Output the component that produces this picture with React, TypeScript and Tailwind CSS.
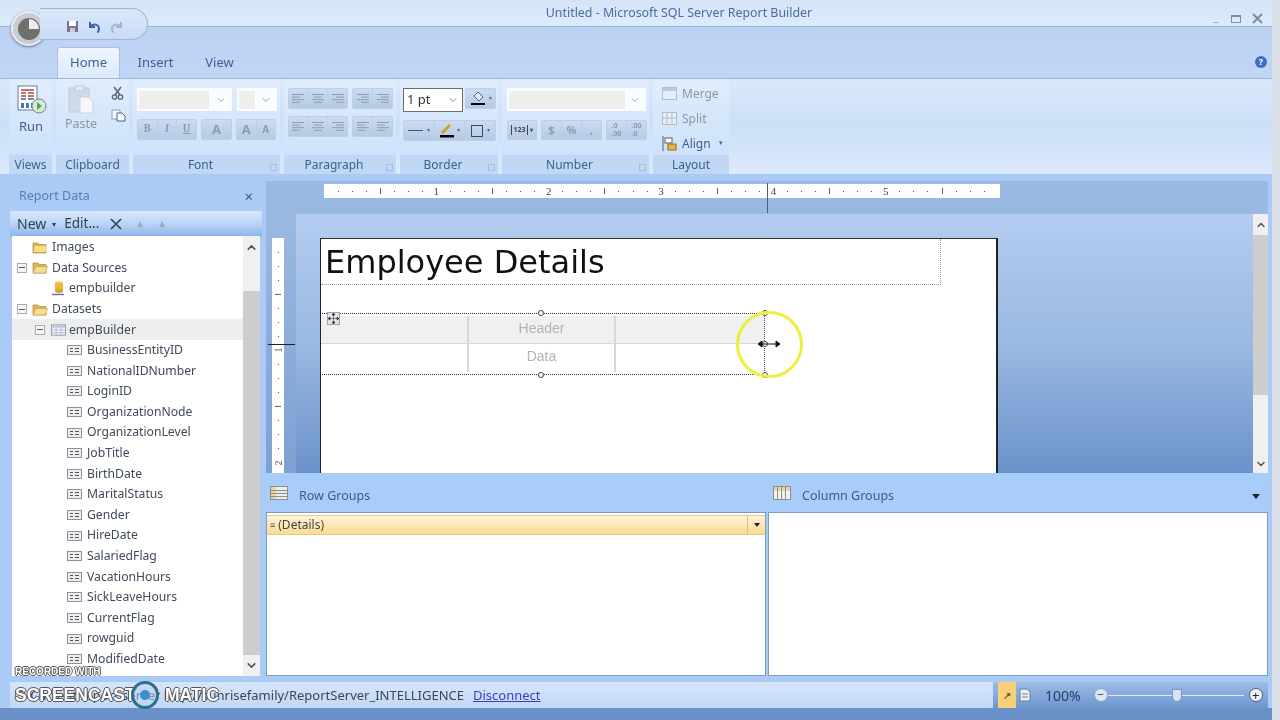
import type { ReactNode } from "react";
import { ChevronDown, ChevronUp } from "lucide-react";

const fields = [
  "BusinessEntityID",
  "NationalIDNumber",
  "LoginID",
  "OrganizationNode",
  "OrganizationLevel",
  "JobTitle",
  "BirthDate",
  "MaritalStatus",
  "Gender",
  "HireDate",
  "SalariedFlag",
  "VacationHours",
  "SickLeaveHours",
  "CurrentFlag",
  "rowguid",
  "ModifiedDate",
];

function Folder({ open }: { open?: boolean }) {
  return (
    <svg width="16" height="13" viewBox="0 0 16 13" className="shrink-0">
      <path d="M1 2h5l1 1.5h7v8.5H1z" fill="#e3b44a" stroke="#a98a4a" strokeWidth="0.7" />
      {open ? (
        <path d="M1 12l2.5-6.5H15.5L13.5 12z" fill="#f6dc8e" stroke="#b99a55" strokeWidth="0.6" />
      ) : (
        <rect x="2" y="5" width="12" height="6" fill="#f8dc82" />
      )}
    </svg>
  );
}

function Expander({ className }: { className: string }) {
  return (
    <span className={`flex h-[10px] w-[10px] shrink-0 items-center justify-center border border-[#a9a9a9] bg-[#f6f6f6] ${className}`}>
      <span className="h-px w-[6px] bg-[#555]" />
    </span>
  );
}

function FieldIcon() {
  return (
    <svg width="15" height="10" viewBox="0 0 15 10" className="shrink-0">
      <rect x="0.5" y="0.5" width="14" height="9" fill="#eceef2" stroke="#8d929b" />
      <path d="M3 3.5h3M3 6.5h3M8 3.5h4M8 6.5h4" stroke="#555" />
    </svg>
  );
}

function TableIcon() {
  return (
    <svg width="15" height="12" viewBox="0 0 16 12" className="shrink-0">
      <rect x="0.5" y="0.5" width="15" height="11" fill="#f0f3f8" stroke="#8e9db3" />
      <rect x="1" y="1" width="14" height="2.5" fill="#b8c8df" />
      <path d="M1 6h14M1 8.8h14M5.5 3v8M10.5 3v8" stroke="#a8b5c8" strokeWidth="0.8" />
    </svg>
  );
}

function DbIcon() {
  return (
    <svg width="14" height="16" viewBox="0 0 14 16" className="shrink-0">
      <ellipse cx="8" cy="3" rx="4" ry="2" fill="#f6d35f" />
      <rect x="4" y="3" width="8" height="8" fill="#e8b93a" />
      <ellipse cx="8" cy="11" rx="4" ry="2" fill="#d7a42c" />
      <path d="M1 14.5h12" stroke="#5874ab" strokeWidth="1.4" />
    </svg>
  );
}

function TreeRow({
  indent,
  expander,
  icon,
  label,
  selected,
  gap = "ml-[4px]",
}: {
  indent: string;
  expander?: string;
  icon: ReactNode;
  label: string;
  selected?: boolean;
  gap?: string;
}) {
  return (
    <div className={`flex h-[20.6px] shrink-0 items-center ${indent} ${selected ? "bg-[#eeeeee]" : ""}`}>
      {expander && <Expander className={expander} />}
      {icon}
      <span className={`${gap} whitespace-nowrap text-[12.2px] text-[#3f4a5a]`}>{label}</span>
    </div>
  );
}

function Tree() {
  return (
    <div className="flex h-[440px] shrink-0 bg-white">
      <div className="flex min-w-0 flex-1 flex-col overflow-hidden pt-[1px]">
        <TreeRow indent="pl-[20px]" icon={<Folder />} label="Images" />
        <TreeRow indent="pl-[5px]" expander="mr-[5px]" icon={<Folder open />} label="Data Sources" />
        <TreeRow indent="pl-[39px]" icon={<DbIcon />} label="empbuilder" gap="ml-[4px]" />
        <TreeRow indent="pl-[5px]" expander="mr-[5px]" icon={<Folder open />} label="Datasets" />
        <TreeRow indent="pl-[23px]" expander="mr-[6px]" selected icon={<TableIcon />} label="empBuilder" gap="ml-[3px]" />
        {fields.map((f) => (
          <TreeRow key={f} indent="pl-[55px]" icon={<FieldIcon />} label={f} gap="ml-[5px]" />
        ))}
      </div>
      <div className="flex w-[17px] shrink-0 flex-col bg-[#f0f0f0]">
        <div className="flex h-[55px] items-start justify-center pt-[5px]">
          <ChevronUp size={13} strokeWidth={3} className="text-[#555]" />
        </div>
        <div className="h-[364px] bg-[#cdcdcd]" />
        <div className="flex flex-1 items-center justify-center">
          <ChevronDown size={13} strokeWidth={3} className="text-[#555]" />
        </div>
      </div>
    </div>
  );
}

function ReportData() {
  return (
    <div className="flex w-[252px] shrink-0 flex-col">
      <div className="flex h-[37px] items-center justify-between pl-[9px] pr-[9px] pt-[8px]">
        <span className="text-[12.5px] text-[#5a7fb0]">Report Data</span>
        <span className="text-[15px] leading-none text-[#3c5a85]">×</span>
      </div>
      <div className="flex h-[25px] items-center rounded-[2px] bg-linear-to-b from-[#d9e8fb] via-[#bcd5f5] to-[#8db5ea] pl-[7px] text-[14px] text-[#2f3f55] shadow-[0_1px_1px_#6f93c4]">
        <span>New</span>
        <span className="ml-[6px] text-[8px]">▾</span>
        <span className="ml-[8px] text-[13.5px]">Edit...</span>
        <svg width="12" height="12" viewBox="0 0 12 12" className="ml-[11px]">
          <path d="M1 1l10 10M11 1L1 11" stroke="#2f3f55" strokeWidth="1.6" />
        </svg>
        <span className="ml-[13px] text-[10px] text-[#95a8bf]">▲</span>
        <span className="ml-[12px] text-[10px] text-[#95a8bf]">▲</span>
      </div>
      <div className="mx-[2px]">
        <Tree />
      </div>
    </div>
  );
}

function Cell({ children, faded = true }: { children: ReactNode; faded?: boolean }) {
  return (
    <span
      className={`flex flex-1 items-center justify-center border-r border-[#bccfe6] text-[11px] font-bold last:border-r-0 ${
        faded ? "text-[#8f9cae]" : "text-[#3d4f68]"
      }`}
    >
      {children}
    </span>
  );
}

function BtnGroup({ w, h = "h-[21px]", children }: { w: string; h?: string; children: ReactNode }) {
  return (
    <div className={`flex ${w} ${h} shrink-0 rounded-[2px] border border-[#bdd0e8] bg-linear-to-b from-[#cbdcf2] to-[#b5c9e5]`}>
      {children}
    </div>
  );
}

function Lines({ align = "left", tint = "#8b9bb2" }: { align?: "left" | "center" | "right"; tint?: string }) {
  const starts = align === "left" ? [1, 1, 1, 1] : align === "right" ? [1, 5, 1, 5] : [1, 3, 1, 3];
  return (
    <svg width="14" height="11" viewBox="0 0 14 11">
      {starts.map((s, i) => (
        <path key={i} d={`M${s} ${1.5 + i * 2.6}h${i % 2 ? 8 : 12}`} stroke={tint} />
      ))}
    </svg>
  );
}

function Combo({ w, inner, children }: { w: string; inner?: string; children?: ReactNode }) {
  return (
    <div className={`flex h-[23px] ${w} shrink-0 items-center bg-[#fafcff] pl-[2px] pr-[5px] text-[13px] text-[#333]`}>
      {inner ? <span className={`h-[18px] ${inner} bg-[#eeeeee]`} /> : children}
      <ChevronDown size={12} className="ml-auto text-[#9aa7b8]" />
    </div>
  );
}

function Group({ w, label, launcher, children }: { w: string; label: string; launcher?: boolean; children: ReactNode }) {
  return (
    <div className={`flex ${w} shrink-0 flex-col rounded-[2px] bg-linear-to-b from-[#e0edfc] to-[#c9dff9]`}>
      <div className="h-[76px] min-h-0">{children}</div>
      <div className={`relative flex h-[19px] items-center justify-center bg-[#c0d7f5] text-[12px] text-[#3f5f92] ${launcher ? "pr-[12px]" : ""}`}>
        {label}
        {launcher && <span className="absolute bottom-[3px] right-[3px] h-[7px] w-[7px] border border-[#a6bcd8]" />}
      </div>
    </div>
  );
}

function Ribbon() {
  return (
    <div className="flex h-[96px] shrink-0 gap-[4px] rounded-[2px] border-t border-[#9fb6d5] bg-linear-to-b from-[#dbe9fb] via-[#cbdff8] to-[#dcebfc] pl-[9px]">
      <Group w="w-[43px]" label="Views">
        <div className="flex flex-col items-center pl-[1px] pt-[6px]">
          <svg width="31" height="30" viewBox="0 0 31 30">
            <rect x="2" y="1" width="19" height="24" fill="#fff" stroke="#6a7b93" />
            <path d="M5 5h13M5 8h5M12 8h6M5 11h5M12 11h6" stroke="#a44" strokeWidth="1.3" />
            <path d="M5 14h5M12 14h6" stroke="#467" strokeWidth="1.3" />
            <path d="M5 18h3v5H5zM10 18h3v5h-3zM15 18h3v5h-3z" fill="#3a78c8" />
            <circle cx="23" cy="21" r="7" fill="#dbe9da" stroke="#71808f" />
            <path d="M21 17l5 4-5 4z" fill="#58a53a" />
          </svg>
          <span className="mt-[2px] text-[13px] text-[#3f5f92]">Run</span>
        </div>
      </Group>
      <Group w="w-[73px]" label="Clipboard">
        <div className="flex pl-[9px] pt-[6px]">
          <div className="flex flex-col items-center">
            <svg width="28" height="30" viewBox="0 0 28 30">
              <rect x="2" y="3" width="20" height="24" fill="#cfdae9" stroke="#bfcada" />
              <rect x="8" y="1" width="9" height="5" fill="#e4e9f0" stroke="#bfcada" />
              <path d="M13 12h8l5 5v11H13z" fill="#f5f7fa" stroke="#c8d2df" />
            </svg>
            <span className="text-[12.5px] text-[#8a97a8]">Paste</span>
          </div>
          <div className="ml-[14px] flex flex-col gap-[9px] pt-[1px]">
            <svg width="13" height="14" viewBox="0 0 13 14">
              <path d="M3 1l6 8M10 1L4 9" stroke="#56657c" strokeWidth="1.5" />
              <circle cx="3.5" cy="11" r="2.2" fill="none" stroke="#56657c" strokeWidth="1.3" />
              <circle cx="9.5" cy="11" r="2.2" fill="none" stroke="#56657c" strokeWidth="1.3" />
            </svg>
            <svg width="15" height="13" viewBox="0 0 15 13">
              <rect x="1" y="1" width="8" height="9" fill="#f6f8fb" stroke="#8ca0ba" />
              <path d="M6 4h5l3 3v5H6z" fill="#fff" stroke="#3f5f92" />
            </svg>
          </div>
        </div>
      </Group>
      <Group w="w-[147px]" label="Font" launcher>
        <div className="flex flex-col gap-[8px] pl-[4px] pr-[3px] pt-[9px]">
          <div className="flex gap-[5px]">
            <Combo w="w-[95px]" inner="w-[70px]" />
            <Combo w="w-[40px]" inner="w-[16px]" />
          </div>
          <div className="flex gap-[4px]">
            <BtnGroup w="w-[60px]">
              <Cell><span className="font-serif">B</span></Cell>
              <Cell><span className="font-serif italic">I</span></Cell>
              <Cell><span className="font-serif underline">U</span></Cell>
            </BtnGroup>
            <BtnGroup w="w-[31px]">
              <Cell><span className="text-[13px]">A</span></Cell>
            </BtnGroup>
            <BtnGroup w="w-[40px]">
              <Cell><span className="text-[13px]">A</span></Cell>
              <Cell><span className="text-[10px]">A</span></Cell>
            </BtnGroup>
          </div>
        </div>
      </Group>
      <Group w="w-[112px]" label="Paragraph" launcher>
        <div className="flex flex-col gap-[7px] pl-[4px] pt-[9px]">
          <div className="flex gap-[4px]">
            <BtnGroup w="w-[60px]">
              <Cell><Lines /></Cell>
              <Cell><Lines align="center" /></Cell>
              <Cell><Lines align="right" /></Cell>
            </BtnGroup>
            <BtnGroup w="w-[41px]">
              <Cell><Lines align="right" /></Cell>
              <Cell><Lines align="right" /></Cell>
            </BtnGroup>
          </div>
          <div className="flex gap-[4px]">
            <BtnGroup w="w-[60px]">
              <Cell><Lines /></Cell>
              <Cell><Lines align="center" /></Cell>
              <Cell><Lines align="right" /></Cell>
            </BtnGroup>
            <BtnGroup w="w-[41px]">
              <Cell><Lines /></Cell>
              <Cell><Lines /></Cell>
            </BtnGroup>
          </div>
        </div>
      </Group>
      <Group w="w-[98px]" label="Border" launcher>
        <div className="flex flex-col gap-[8px] pl-[3px] pt-[9px]">
          <div className="flex gap-[2px]">
            <div className="flex h-[24px] w-[60px] items-center border border-[#6d6d6d] bg-white pl-[3px] pr-[3px] text-[13px] text-[#333]">
              1 pt
              <ChevronDown size={12} className="ml-auto text-[#7d8ea5]" />
            </div>
            <BtnGroup w="w-[31px]">
              <span className="flex flex-1 items-center justify-center gap-[2px]">
                <svg width="17" height="15" viewBox="0 0 17 15">
                  <path d="M8 1l5 5-4 4-5-5z" fill="#e8edf5" stroke="#51647f" />
                  <path d="M1 12h14v2H1z" fill="#000" />
                </svg>
                <span className="text-[6px] text-[#667]">▾</span>
              </span>
            </BtnGroup>
          </div>
          <BtnGroup w="w-[93px]">
            <span className="flex flex-1 items-center justify-center gap-[4px] border-r border-[#bccfe6]">
              <span className="h-px w-[15px] bg-[#555]" />
              <span className="text-[6px] text-[#667]">▾</span>
            </span>
            <span className="flex flex-1 items-center justify-center gap-[2px] border-r border-[#bccfe6]">
              <svg width="16" height="15" viewBox="0 0 16 15">
                <path d="M3 10l8-8" stroke="#d4a017" strokeWidth="2.5" />
                <path d="M1 12h14v2.5H1z" fill="#000" />
              </svg>
              <span className="text-[6px] text-[#667]">▾</span>
            </span>
            <span className="flex flex-1 items-center justify-center gap-[4px]">
              <span className="h-[12px] w-[12px] border border-[#445]" />
              <span className="text-[6px] text-[#667]">▾</span>
            </span>
          </BtnGroup>
        </div>
      </Group>
      <Group w="w-[147px]" label="Number" launcher>
        <div className="flex flex-col gap-[9px] pl-[5px] pt-[9px]">
          <Combo w="w-[139px]" inner="w-[116px]" />
          <div className="flex gap-[4px]">
            <BtnGroup w="w-[30px]" h="h-[20px]">
              <span className="flex flex-1 items-center justify-center gap-[2px] text-[7px] font-bold text-[#445]">
                <span className="border-x border-[#445] px-px">123</span>
                <span className="text-[6px]">▾</span>
              </span>
            </BtnGroup>
            <BtnGroup w="w-[61px]" h="h-[20px]">
              <Cell>$</Cell>
              <Cell>%</Cell>
              <Cell>,</Cell>
            </BtnGroup>
            <BtnGroup w="w-[41px]" h="h-[20px]">
              <Cell><span className="text-[7px] leading-[8px]">.0<br />.00</span></Cell>
              <Cell><span className="text-[7px] leading-[8px]">.00<br />.0</span></Cell>
            </BtnGroup>
          </div>
        </div>
      </Group>
      <Group w="w-[76px]" label="Layout">
        <div className="flex flex-col gap-[6px] pl-[9px] pt-[5px] text-[12px]">
          <div className="flex h-[19px] items-center gap-[5px] text-[#8a97a8]">
            <svg width="15" height="13" viewBox="0 0 15 13">
              <rect x="0.5" y="0.5" width="14" height="12" fill="#e8eef6" stroke="#aebdd0" />
              <rect x="1" y="1" width="13" height="3" fill="#b7cbe4" />
            </svg>
            Merge
          </div>
          <div className="flex h-[19px] items-center gap-[5px] text-[#8a97a8]">
            <svg width="15" height="13" viewBox="0 0 15 13">
              <rect x="0.5" y="0.5" width="14" height="12" fill="#e8eef6" stroke="#aebdd0" />
              <path d="M5 0v13M10 0v13M0 6h15" stroke="#aebdd0" />
            </svg>
            Split
          </div>
          <div className="flex h-[19px] items-center gap-[5px] text-[#3f5f92]">
            <svg width="15" height="15" viewBox="0 0 15 15">
              <path d="M1 0v15" stroke="#4c5f7a" />
              <rect x="3" y="2" width="7" height="5" fill="#fff" stroke="#4c5f7a" />
              <rect x="6" y="8" width="8" height="6" fill="#eab543" stroke="#8e6d25" />
            </svg>
            Align
            <span className="ml-[3px] text-[7px]">▾</span>
          </div>
        </div>
      </Group>
    </div>
  );
}

function Handle({ className }: { className: string }) {
  return <span className={`absolute h-[6px] w-[6px] rounded-full border border-[#444] bg-white ${className}`} />;
}

function TopRuler() {
  return (
    <div className="flex h-[14px] w-[676px] items-center bg-white pl-[7px] font-['Liberation_Serif',serif] text-[11px] text-[#444]">
      {Array.from({ length: 47 }).map((_, i) => {
        const n = i + 1;
        return (
          <span key={n} className="flex w-[14.05px] shrink-0 items-center justify-center">
            {n % 8 === 0 ? n / 8 : n % 4 === 0 ? <span className="h-[6px] w-px bg-[#666]" /> : <span className="h-px w-px bg-[#555]" />}
          </span>
        );
      })}
    </div>
  );
}

function LeftRuler() {
  return (
    <div className="flex h-full w-[12px] shrink-0 flex-col items-center overflow-hidden bg-white pt-[7px] font-['Liberation_Serif',serif] text-[10px] leading-none text-[#444]">
      {Array.from({ length: 20 }).map((_, i) => {
        const n = i + 1;
        return (
          <span key={n} className="flex h-[14.05px] w-full shrink-0 items-center justify-center">
            {n % 8 === 0 ? (
              <span className="-rotate-90">{n / 8}</span>
            ) : n % 4 === 0 ? (
              <span className="h-px w-[6px] bg-[#666]" />
            ) : (
              <span className="h-px w-px bg-[#555]" />
            )}
          </span>
        );
      })}
    </div>
  );
}

const hatch = "bg-[#f0f0f0]";

function ReportTable() {
  return (
    <div className="relative -ml-px mt-[28px] w-[445px]">
      <div className="border-y border-dotted border-[#333] py-[2px]">
        <div className="grid grid-cols-[149px_147px_149px] text-center font-['Liberation_Sans',sans-serif] text-[14px] text-[#b4b4b4]">
          <div className={`h-[28px] border-b border-r-2 border-[#d8d8d8] ${hatch}`} />
          <div className={`flex h-[28px] items-center justify-center border-b border-r-2 border-[#d8d8d8] pb-[3px] font-medium ${hatch}`}>Header</div>
          <div className={`h-[28px] border-b border-[#d8d8d8] ${hatch}`} />
          <div className="h-[28px] border-r-2 border-[#d8d8d8]" />
          <div className="flex h-[28px] items-center justify-center border-r-2 border-[#d8d8d8] pb-[3px]">Data</div>
          <div className="h-[28px]" />
        </div>
      </div>
      <span className="absolute bottom-0 right-0 top-0 border-r border-dotted border-[#555]" />
      <span className="absolute bottom-0 left-[-1px] top-0 border-l-2 border-dotted border-[#666]" />
      <Handle className="left-[-5px] top-[-3px]" />
      <Handle className="left-[218px] top-[-3px]" />
      <Handle className="right-[-3px] top-[-3px]" />
      <Handle className="left-[-5px] top-[28px]" />
      <Handle className="right-[-3px] top-[28px]" />
      <Handle className="bottom-[-3px] left-[-5px]" />
      <Handle className="bottom-[-3px] left-[218px]" />
      <Handle className="bottom-[-3px] right-[-3px]" />
      <span className="absolute left-[7px] top-[-1px] flex h-[13px] w-[13px] items-center justify-center border border-[#9aa6b8] bg-[#dfe4ec]">
        <svg width="11" height="11" viewBox="0 0 11 11">
          <path d="M5.5 1v9M1 5.5h9M5.5 0l-1.5 2h3zM5.5 11l-1.5-2h3zM0 5.5l2-1.5v3zM11 5.5l-2-1.5v3z" fill="#222" stroke="#222" strokeWidth="0.5" />
        </svg>
      </span>
    </div>
  );
}

function DesignSurface() {
  return (
    <div className="relative flex min-w-0 flex-1 flex-col overflow-hidden">
      <div className="flex h-[33px] shrink-0 bg-[#9ab9e1] pl-[58px] pt-[3px]">
        <TopRuler />
      </div>
      <div className="flex min-h-0 flex-1">
        <div className="flex w-[30px] shrink-0 bg-linear-to-b from-[#9ab9e1] to-[#7fa1d2] pl-[6px] pr-[12px] pt-[24px]">
          <LeftRuler />
        </div>
        <div className="flex min-w-0 flex-1 bg-linear-to-b from-[#b4ccf0] via-[#9bb9e2] to-[#6b92ca] pl-[24px] pt-[24px]">
          <div className="h-[240px] w-[678px] shrink-0 overflow-hidden border-x border-t border-x-[#222] border-r-2 border-t-[#333] bg-white">
            <div className="flex h-[46px] w-[620px] items-center border-b border-r border-dotted border-[#999] pl-[4px] font-['DejaVu_Sans',sans-serif] text-[32px] text-[#111]">
              Employee Details
            </div>
            <ReportTable />
          </div>
        </div>
        <div className="flex w-[15px] shrink-0 flex-col bg-[#f0f0f0]">
          <div className="flex h-[21px] items-center justify-center">
            <ChevronUp size={12} strokeWidth={3} className="text-[#555]" />
          </div>
          <div className="h-[160px] bg-[#cdcdcd]" />
          <div className="flex flex-1 items-end justify-center pb-[3px]">
            <ChevronDown size={12} strokeWidth={3} className="text-[#555]" />
          </div>
        </div>
      </div>
      <span className="absolute left-[501px] top-[2px] h-[30px] w-px bg-[#4d5f78]" />
      <span className="absolute left-[2px] top-[163px] h-px w-[27px] bg-[#222]" />
      <span className="absolute left-[470px] top-[130px] h-[67px] w-[67px] rounded-full border-[3px] border-[#f0ee3c]" />
      <svg width="24" height="8" viewBox="0 0 24 8" className="absolute left-[491px] top-[159px]">
        <path d="M1 4h22M1 4l4-3v6zM23 4l-4-3v6z" fill="#111" stroke="#111" />
      </svg>
    </div>
  );
}

function GroupPanes() {
  return (
    <div className="flex h-[203px] shrink-0 flex-col">
      <div className="flex h-[39px] shrink-0 bg-[#a9cdfb] text-[12.5px] text-[#44597a]">
        <div className="flex w-[502px] items-center gap-[11px] pl-[4px]">
          <svg width="18" height="14" viewBox="0 0 18 14">
            <rect x="0.5" y="0.5" width="17" height="13" fill="#e8edf3" stroke="#8f8f85" />
            <rect x="1" y="1" width="5" height="12" fill="#e8d3a4" />
            <path d="M1 4.5h16M1 7.5h16M1 10.5h16" stroke="#8f8f85" />
          </svg>
          <span className="pt-[7px]">Row Groups</span>
        </div>
        <div className="flex flex-1 items-center gap-[11px] pl-[5px]">
          <svg width="18" height="14" viewBox="0 0 18 14">
            <rect x="0.5" y="0.5" width="17" height="13" fill="#f0f2f5" stroke="#8f8f85" />
            <rect x="1" y="1" width="16" height="4" fill="#e8d3a4" />
            <path d="M4.5 1v12M8.5 1v12M12.5 1v12" stroke="#8f8f85" />
          </svg>
          <span className="pt-[7px]">Column Groups</span>
          <span className="ml-auto mr-[8px] mt-[7px] h-0 w-0 border-x-[4px] border-t-[5px] border-x-transparent border-t-[#222]" />
        </div>
      </div>
      <div className="flex min-h-0 flex-1 gap-[2px]">
        <div className="h-full w-[500px] shrink-0 border border-[#7f9db9] bg-white p-[2px] pl-0 pr-0">
          <div className="flex h-[20px] items-center border-y border-[#e6cb91] bg-linear-to-b from-[#fff3d8] to-[#fcdb92] pl-[3px] text-[12px] text-[#444]">
            <span className="mr-[3px] text-[9px]">≡</span>(Details)
            <span className="ml-auto flex h-full w-[18px] items-center justify-center border-l border-[#d9bd86]">
              <span className="h-0 w-0 border-x-[3.5px] border-t-[4px] border-x-transparent border-t-[#222]" />
            </span>
          </div>
        </div>
        <div className="h-full flex-1 border border-[#7f9db9] bg-white" />
      </div>
    </div>
  );
}

function StatusBar() {
  return (
    <div className="flex h-[26px] shrink-0 pl-[10px]">
      <div className="flex w-[983px] items-center bg-linear-to-b from-[#d6e5f9] to-[#c2d8f5] pt-px text-[13px] text-[#3b4658]">
        <span className="ml-[5px] h-[10px] w-[10px] shrink-0 rounded-[2px] border border-[#4f8a3c] bg-[#dfeedd]" />
        <span className="flex w-[439px] shrink-0 justify-end whitespace-nowrap">Current report server http://sunrisefamily/ReportServer_INTELLIGENCE</span>
        <span className="ml-[9px] text-[#3a3fc4] underline">Disconnect</span>
      </div>
      <div className="flex w-[275px] items-center bg-linear-to-b from-[#9dbce6] to-[#6d96cf] pl-[5px]">
        <span className="flex h-[26px] w-[18px] items-center justify-center bg-[#f9cf7a] text-[10px] font-bold text-[#6f6142]">↗</span>
        <span className="flex h-[26px] w-[18px] items-center justify-center">
          <svg width="12" height="14" viewBox="0 0 12 14">
            <path d="M1 1h7l3 3v9H1z" fill="#e9eff7" stroke="#6a7f9c" />
            <path d="M3 6h6M3 9h6" stroke="#6a7f9c" />
          </svg>
        </span>
        <span className="ml-[11px] text-[14px] text-[#2b3f60]">100%</span>
        <span className="ml-[13px] flex h-[14px] w-[14px] items-center justify-center rounded-full border border-[#8ba3c4] bg-[#dde7f5] text-[12px] leading-none text-[#445]">−</span>
        <span className="relative h-px w-[136px] bg-[#dfe9f7]">
          <span className="absolute left-[64px] top-[-6px] h-[13px] w-[10px] rounded-b-[5px] border border-[#7f95b5] bg-[#d7e3f4]" />
        </span>
        <span className="ml-[5px] flex h-[14px] w-[14px] items-center justify-center rounded-full border border-[#52627c] bg-[#eef3fa] text-[13px] leading-none text-[#222]">+</span>
      </div>
    </div>
  );
}

export default function App() {
  return (
    <div className="relative flex h-[720px] w-[1280px] overflow-hidden bg-[#a9cbf6] font-['Noto_Sans',sans-serif] blur-[0.3px]">
      <div className="flex w-[1272px] shrink-0 flex-col">
        {/* title + tabs */}
        <div className="flex h-[27px] shrink-0 items-center justify-center border-b border-[#9fb4cf] bg-linear-to-b from-[#d5e3f7] to-[#dcebfd] pl-[86px] pt-px text-[12.4px] text-[#4d6c9f]">
          Untitled - Microsoft SQL Server Report Builder
        </div>
        <div className="flex h-[51px] shrink-0 items-end bg-linear-to-b from-[#bcd2f3] to-[#c0d6f6] pl-[57px] text-[13px] text-[#3f5f92]">
          <span className="flex h-[31px] w-[63px] items-center justify-center rounded-t-[3px] border border-b-0 border-[#a9c0de] bg-linear-to-b from-[#f0f6fe] to-[#dbe9fb]">Home</span>
          <span className="flex h-[31px] w-[71px] items-center justify-center">Insert</span>
          <span className="flex h-[31px] w-[57px] items-center justify-center">View</span>
          <span className="mb-[10px] ml-auto mr-[5px] flex h-[12px] w-[12px] items-center justify-center rounded-full bg-[#3f6fc2] text-[9px] font-bold text-white">?</span>
        </div>
        <Ribbon />
        <div className="flex min-h-0 flex-1 pl-[10px] pr-[4px]">
          <ReportData />
          <div className="ml-[4px] flex min-w-0 flex-1 flex-col pt-[7px]">
            <DesignSurface />
            <GroupPanes />
          </div>
        </div>
        <div className="h-[6px] shrink-0" />
        <StatusBar />
        <div className="h-[12px] shrink-0 bg-[#6a90c8]" />
      </div>
      <div className="flex-1 bg-[#dadfe8]" />

      {/* overlays */}
      <span className="absolute left-[11px] top-[11px] flex h-[35px] w-[35px] items-center justify-center rounded-full border-2 border-[#e9edf2] bg-[#c9cdd3] shadow-[0_1px_3px_#6c7d96]">
        <svg width="24" height="24" viewBox="0 0 24 24">
          <circle cx="12" cy="12" r="11" fill="#6f6f6b" />
          <path d="M12 2v10h10A10 10 0 0 0 12 2z" fill="#ecedec" />
        </svg>
      </span>
      <div className="absolute left-[40px] top-[8px] flex h-[32px] w-[108px] items-center gap-[9px] rounded-r-[16px] border border-l-0 border-[#9fb6d6] bg-linear-to-b from-[#dbe8fa] to-[#c8dbf6] pl-[26px] pt-[5px]">
        <svg width="13" height="13" viewBox="0 0 13 13">
          <path d="M1 1h11v11H1z" fill="#7b6f9c" />
          <rect x="3" y="1" width="7" height="5" fill="#fff" />
          <rect x="4" y="8" width="5" height="4" fill="#c9c7d6" />
        </svg>
        <svg width="13" height="12" viewBox="0 0 13 12">
          <path d="M2 1v5h5M2 6c3-4 9-3 9 2 0 1-1 3-2 3" fill="none" stroke="#3d62a8" strokeWidth="2" />
        </svg>
        <svg width="13" height="12" viewBox="0 0 13 12">
          <path d="M11 1v5H6M11 6C8 2 2 3 2 8c0 1 1 3 2 3" fill="none" stroke="#a7b5c6" strokeWidth="2" />
        </svg>
      </div>
      <span className="absolute right-[62px] top-[11px] text-[11px] font-bold leading-none text-[#7c8da8]">_</span>
      <span className="absolute right-[39px] top-[15px] h-[8px] w-[10px] border border-t-2 border-[#7c8da8]" />
      <svg width="11" height="11" viewBox="0 0 11 11" className="absolute right-[17px] top-[13px]">
        <path d="M1 1l9 9M10 1l-9 9" stroke="#7c8da8" strokeWidth="2" />
      </svg>

      {/* recorder watermark */}
      <span className="absolute left-[15px] top-[667px] font-['Liberation_Sans',sans-serif] text-[10px] font-bold leading-none text-white [text-shadow:1px_0_#555,-1px_0_#555,0_1px_#555,0_-1px_#555]">
        RECORDED WITH
      </span>
      <div className="absolute left-[15px] top-[681px] flex items-center font-['Liberation_Sans',sans-serif] text-[17.5px] font-bold text-white [text-shadow:1px_0_#555,-1px_0_#555,0_1px_#555,0_-1px_#555]">
        <span className="w-[116px]">SCREENCAST</span>
        <span className="flex h-[28px] w-[28px] items-center justify-center rounded-full border-[3px] border-[#2e6d94] bg-[#b9d2ec]/50">
          <span className="h-[10px] w-[10px] rounded-full bg-[#3c8ed0]" />
        </span>
        <span className="ml-[6px]">MATIC</span>
      </div>
    </div>
  );
}
